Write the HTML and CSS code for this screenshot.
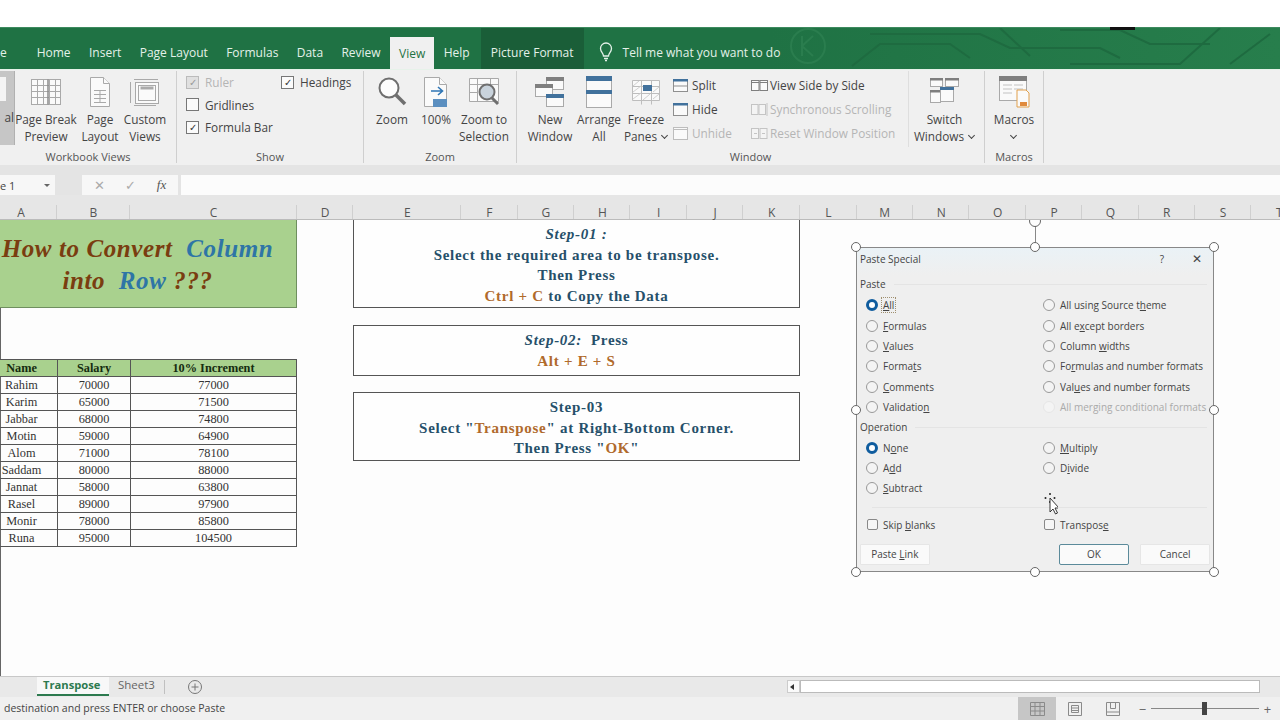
FILE: index.html
```html
<!DOCTYPE html>
<html lang="en">
<head>
    <meta charset="UTF-8">
    <title>Transpose - Excel</title>
    <link rel="stylesheet" href="styles.css">
</head>
<body>

<div class="top-gap"></div>

<!-- Ribbon tabs -->
<div class="tabbar">
    <svg class="circuit" width="520" height="42" viewBox="0 0 520 42" fill="none" stroke="#1e6b40" stroke-width="2">
        <circle cx="48" cy="18" r="17" stroke="#2a7d4e"/>
        <path d="M42 8v20M42 18l11-10M42 18l11 10" stroke="#2a7d4e"/>
        <path d="M92 38l28-22h70l20 14M110 6h110l30 14h90l20 10M240 0l30 28M310 36h110l40-36M470 36l40-30M300 2h60l30 14h60"/>
    </svg>
    <i class="title-mark"></i>
    <span class="tab cut">e</span>
    <span class="tab">Home</span>
    <span class="tab">Insert</span>
    <span class="tab">Page Layout</span>
    <span class="tab">Formulas</span>
    <span class="tab">Data</span>
    <span class="tab">Review</span>
    <span class="tab active">View</span>
    <span class="tab">Help</span>
    <span class="tab picture">Picture Format</span>
    <svg class="bulb" width="16" height="20" viewBox="0 0 16 20" fill="none" stroke="#e4f1e9" stroke-width="1.3">
        <path d="M5.5 14c0-3-3-4-3-7.5a5.5 5.5 0 0 1 11 0c0 3.500-3 4.500-3 7.500z"/>
        <path d="M6 16.500h4M7 18.500h2"/>
    </svg>
    <span class="tell">Tell me what you want to do</span>
</div>

<!-- Ribbon -->
<div class="ribbon">
    <div class="group g-workbook">
        <div class="group-body">
            <div class="normal-btn">al</div>
            <div class="big w62">
                <svg width="32" height="30" viewBox="0 0 32 30" fill="#fafafa" stroke="#a9a9a9"><rect x="1.500" y="2.500" width="29" height="25"/><path d="M1.500 8.500h29M1.500 14.500h29M1.500 20.500h29M7.500 2.500v25M13.500 2.500v25M19.500 2.500v25M25.500 2.500v25"/><path d="M18 2.500v25" stroke="#8a8a8a" stroke-width="1.500"/></svg>
                <span>Page Break<br>Preview</span>
            </div>
            <div class="big w46">
                <svg width="26" height="32" viewBox="0 0 26 32" fill="#fafafa" stroke="#a9a9a9"><path d="M3.500 1.500h13l6 6v23h-19z"/><path d="M16.500 1.500v6h6M7 14.500h12M7 18.500h12M7 22.500h12M7 26.500h12M13 14.500v12"/></svg>
                <span>Page<br>Layout</span>
            </div>
            <div class="big w44">
                <svg width="32" height="30" viewBox="0 0 32 30" fill="none" stroke="#a9a9a9"><path d="M1.500 5v21M5 2.500h24M5 28.500h22"/><rect x="6.500" y="5.500" width="23" height="21" fill="#fafafa"/><rect x="9.500" y="8.500" width="17" height="15"/><rect x="12" y="10" width="12" height="2" fill="#a9a9a9"/></svg>
                <span>Custom<br>Views</span>
            </div>
        </div>
        <div class="group-label">Workbook Views</div>
    </div>

    <div class="group g-show">
        <div class="group-body">
            <div class="show-col w95">
                <div class="check-row off"><span class="check dim">&#10003;</span>Ruler</div>
                <div class="check-row"><span class="check"></span>Gridlines</div>
                <div class="check-row"><span class="check">&#10003;</span>Formula Bar</div>
            </div>
            <div class="show-col">
                <div class="check-row"><span class="check">&#10003;</span>Headings</div>
            </div>
        </div>
        <div class="group-label">Show</div>
    </div>

    <div class="group g-zoom">
        <div class="group-body">
            <div class="big w44">
                <svg width="32" height="32" viewBox="0 0 32 32" fill="none" stroke="#6f6f6f" stroke-width="2"><circle cx="13" cy="12" r="9.500" fill="#fdfdfd"/><path d="M20 19l9 9" stroke-width="3.500"/></svg>
                <span>Zoom</span>
            </div>
            <div class="big w44">
                <svg width="28" height="32" viewBox="0 0 28 32" fill="#fafafa" stroke="#a9a9a9"><path d="M2.500 1.500h15l7 7v22h-22z"/><path d="M17.500 1.500v7h7"/><path d="M9 15h11M16 11l4.500 4-4.500 4" fill="none" stroke="#2f76b5" stroke-width="1.600"/><rect x="11" y="23" width="14" height="8" fill="#5b8fc0" stroke="none"/></svg>
                <span>100%</span>
            </div>
            <div class="big w52">
                <svg width="32" height="32" viewBox="0 0 32 32" fill="#fafafa" stroke="#a9a9a9"><path d="M1.500 2.500h29v23h-29zM1.500 8.500h29M9.500 2.500v23M22.500 2.500v6M1.500 16.500h8"/><circle cx="19" cy="16" r="7.500" fill="#c9d3dc" stroke="#6f6f6f" stroke-width="2"/><path d="M24 22l6 6" stroke="#6f6f6f" stroke-width="3"/></svg>
                <span>Zoom to<br>Selection</span>
            </div>
        </div>
        <div class="group-label">Zoom</div>
    </div>

    <div class="group g-window">
        <div class="group-body">
            <div class="big w50">
                <svg width="32" height="32" viewBox="0 0 32 32" fill="#fafafa" stroke="#a9a9a9"><rect x="12.500" y="1.500" width="17" height="12"/><rect x="12" y="1" width="18" height="4" fill="#7f7f7f" stroke="none"/><rect x="1.500" y="8.500" width="17" height="12"/><rect x="1" y="8" width="18" height="4" fill="#7f7f7f" stroke="none"/><rect x="12.500" y="18.500" width="17" height="12"/><rect x="12" y="18" width="18" height="4" fill="#41719c" stroke="none"/></svg>
                <span>New<br>Window</span>
            </div>
            <div class="big w48">
                <svg width="28" height="34" viewBox="0 0 28 34" fill="#fafafa" stroke="#a9a9a9"><rect x="1.500" y="1.500" width="25" height="31"/><rect x="1" y="1" width="26" height="5" fill="#41719c" stroke="none"/><rect x="1" y="15" width="26" height="4" fill="#41719c" stroke="none"/></svg>
                <span>Arrange<br>All</span>
            </div>
            <div class="big w46">
                <svg width="30" height="28" viewBox="0 0 30 28" fill="#fafafa" stroke="#bdbdbd"><path d="M1.500 2.500h27v20h-27zM1.500 8.500h27M1.500 15.500h27M10.500 2.500v24M20.500 2.500v24"/><path d="M2 8l6-5M2 14l8-6M2 21l8-6M12 22l7-6M22 21l6-5M22 14l6-5" stroke="#d0d0d0"/><rect x="12" y="7" width="9" height="6" fill="#41719c" stroke="none"/></svg>
                <span>Freeze<br>Panes<i class="caret"></i></span>
            </div>
            <div class="small-col w78">
                <div class="small-row">
                    <svg width="15" height="15" viewBox="0 0 15 15" fill="#fafafa" stroke="#8f8f8f"><rect x=".5" y="1.500" width="14" height="12"/><rect x="0" y="1" width="15" height="2.500" fill="#41719c" stroke="none"/><path d="M.5 8h14"/></svg>Split
                </div>
                <div class="small-row">
                    <svg width="15" height="15" viewBox="0 0 15 15" fill="#fafafa" stroke="#8f8f8f"><rect x=".5" y="1.500" width="14" height="12"/><rect x="0" y="1" width="15" height="2.500" fill="#41719c" stroke="none"/></svg>Hide
                </div>
                <div class="small-row off">
                    <svg width="15" height="15" viewBox="0 0 15 15" fill="#fafafa" stroke="#bdbdbd"><rect x=".5" y="1.500" width="14" height="12"/><path d="M.5 3.500h14"/></svg>Unhide
                </div>
            </div>
            <div class="small-col w159">
                <div class="small-row tight">
                    <svg width="17" height="15" viewBox="0 0 17 15" fill="#fafafa" stroke="#7f7f7f"><rect x=".5" y="2.500" width="7.500" height="10"/><rect x="9" y="2.500" width="7.500" height="10"/><path d="M.5 4.500h7.500M9 4.500h7.500"/></svg>View Side by Side
                </div>
                <div class="small-row off tight">
                    <svg width="17" height="15" viewBox="0 0 17 15" fill="#f4f4f4" stroke="#c4c4c4"><rect x=".5" y="2.500" width="6.500" height="10"/><rect x="8" y="2.500" width="6.500" height="10"/><path d="M16 1v13"/></svg>Synchronous Scrolling
                </div>
                <div class="small-row off tight">
                    <svg width="17" height="15" viewBox="0 0 17 15" fill="#f4f4f4" stroke="#c4c4c4"><rect x=".5" y="2.500" width="7" height="10"/><rect x="9" y="2.500" width="7" height="10"/><path d="M3 7.500h3M11 7.500h3"/></svg>Reset Window Position
                </div>
            </div>
            <div class="big w72 divided">
                <svg width="32" height="32" viewBox="0 0 32 32" fill="#fafafa" stroke="#a9a9a9"><rect x="1.500" y="2.500" width="12" height="8"/><rect x="16.500" y="2.500" width="13" height="8"/><rect x="1.500" y="14.500" width="10" height="12"/><rect x="1" y="2" width="13" height="2.500" fill="#7f7f7f" stroke="none"/><rect x="16" y="2" width="14" height="2.500" fill="#7f7f7f" stroke="none"/><rect x="1" y="14" width="11" height="2.500" fill="#7f7f7f" stroke="none"/><rect x="11.500" y="11.500" width="13" height="14"/><rect x="11" y="11" width="14" height="3" fill="#41719c" stroke="none"/></svg>
                <span>Switch<br>Windows<i class="caret"></i></span>
            </div>
        </div>
        <div class="group-label">Window</div>
    </div>

    <div class="group g-macros">
        <div class="group-body">
            <div class="big w58">
                <svg width="36" height="34" viewBox="0 0 36 34" fill="#fafafa" stroke="#a9a9a9"><rect x="3.500" y="1.500" width="27" height="24"/><rect x="3" y="1" width="28" height="5" fill="#7f7f7f" stroke="none"/><path d="M7 10h9M18 10h9M7 14h9M18 14h9M7 18h9" stroke="#c2c2c2"/><path d="M21 15h9l3 3v14H21z" stroke="#e1a04c"/><rect x="24" y="27" width="7" height="4" fill="#e08a3c" stroke="none"/></svg>
                <span>Macros<br><i class="caret solo"></i></span>
            </div>
        </div>
        <div class="group-label">Macros</div>
    </div>
</div>
<div class="ribbon-shade"></div>

<!-- Formula bar -->
<div class="formula-bar">
    <div class="name-box"><span>e 1</span><i class="small-arrow"></i></div>
    <div class="grip"></div>
    <div class="fx-box">
        <span class="fx-btn">&#10005;</span>
        <span class="fx-btn">&#10003;</span>
        <span class="fx-btn fx">fx</span>
    </div>
    <div class="fx-input"></div>
</div>

<!-- Column letters -->
<div class="col-head">
    <span class="w72">A</span><span class="w73">B</span><span class="w167">C</span><span class="w56">D</span>
    <span class="w108">E</span><span class="w56">F</span><span class="w57">G</span><span class="w56">H</span>
    <span class="w57">I</span><span class="w56">J</span><span class="w57">K</span><span class="w57">L</span>
    <span class="w56">M</span><span class="w57">N</span><span class="w56">O</span><span class="w57">P</span>
    <span class="w56">Q</span><span class="w56">R</span><span class="w56">S</span><span class="w56">T</span>
</div>

<!-- Sheet -->
<div class="sheet">
    <div class="left-block">
        <div class="title-box">
            <span class="brown">How to Convert</span>&nbsp; <span class="blue">Column</span><br>
            <span class="brown">into</span>&nbsp; <span class="blue">Row</span> <span class="brown">???</span>
        </div>
        <table class="salary">
            <tr><th class="c-name">Name</th><th class="c-sal">Salary</th><th>10% Increment</th></tr>
            <tr><td>Rahim</td><td>70000</td><td>77000</td></tr>
            <tr><td>Karim</td><td>65000</td><td>71500</td></tr>
            <tr><td>Jabbar</td><td>68000</td><td>74800</td></tr>
            <tr><td>Motin</td><td>59000</td><td>64900</td></tr>
            <tr><td>Alom</td><td>71000</td><td>78100</td></tr>
            <tr><td>Saddam</td><td>80000</td><td>88000</td></tr>
            <tr><td>Jannat</td><td>58000</td><td>63800</td></tr>
            <tr><td>Rasel</td><td>89000</td><td>97900</td></tr>
            <tr><td>Monir</td><td>78000</td><td>85800</td></tr>
            <tr><td>Runa</td><td>95000</td><td>104500</td></tr>
        </table>
    </div>

    <div class="steps">
        <div class="step step-1">
            <em>Step-01 :</em><br>
            Select the required area to be transpose.<br>
            Then Press<br>
            <span class="key">Ctrl + C</span> to Copy the Data
        </div>
        <div class="step step-2">
            <em>Step-02:</em>&nbsp; Press<br>
            <span class="key">Alt + E + S</span>
        </div>
        <div class="step step-3">
            Step-03<br>
            Select "<span class="key">Transpose</span>" at Right-Bottom Corner.<br>
            Then Press "<span class="key">OK</span>"
        </div>
    </div>

    <div class="dialog">
        <i class="rotate-line"></i><i class="rotate-knob"></i>
        <i class="handle h-tl"></i><i class="handle h-tc"></i><i class="handle h-tr"></i>
        <i class="handle h-ml"></i><i class="handle h-mr"></i>
        <i class="handle h-bl"></i><i class="handle h-bc"></i><i class="handle h-br"></i>

        <div class="dlg-title"><span>Paste Special</span><span class="dlg-help">?</span><span class="dlg-close">&#10005;</span></div>

        <div class="dlg-label">Paste</div>
        <div class="opts">
            <div class="opt"><i class="radio on"></i><span class="focus"><u>A</u>ll</span></div>
            <div class="opt"><i class="radio"></i><span>All using Source t<u>h</u>eme</span></div>
            <div class="opt"><i class="radio"></i><span><u>F</u>ormulas</span></div>
            <div class="opt"><i class="radio"></i><span>All e<u>x</u>cept borders</span></div>
            <div class="opt"><i class="radio"></i><span><u>V</u>alues</span></div>
            <div class="opt"><i class="radio"></i><span>Column <u>w</u>idths</span></div>
            <div class="opt"><i class="radio"></i><span>Forma<u>t</u>s</span></div>
            <div class="opt"><i class="radio"></i><span>Fo<u>r</u>mulas and number formats</span></div>
            <div class="opt"><i class="radio"></i><span><u>C</u>omments</span></div>
            <div class="opt"><i class="radio"></i><span>Val<u>u</u>es and number formats</span></div>
            <div class="opt"><i class="radio"></i><span>Validatio<u>n</u></span></div>
            <div class="opt disabled"><i class="radio"></i><span>All merging conditional formats</span></div>
        </div>

        <div class="dlg-label">Operation</div>
        <div class="opts">
            <div class="opt"><i class="radio on"></i><span>N<u>o</u>ne</span></div>
            <div class="opt"><i class="radio"></i><span><u>M</u>ultiply</span></div>
            <div class="opt"><i class="radio"></i><span>A<u>d</u>d</span></div>
            <div class="opt"><i class="radio"></i><span>D<u>i</u>vide</span></div>
            <div class="opt"><i class="radio"></i><span><u>S</u>ubtract</span></div>
        </div>

        <div class="dlg-rule"></div>
        <div class="opts">
            <div class="opt"><i class="box"></i><span>Skip <u>b</u>lanks</span></div>
            <div class="opt"><i class="box"></i><span>Transpos<u>e</u></span></div>
        </div>

        <div class="dlg-buttons">
            <button class="dlg-btn link">Paste <u>L</u>ink</button>
            <button class="dlg-btn ok">OK</button>
            <button class="dlg-btn">Cancel</button>
        </div>

        <svg class="cursor" width="14" height="24" viewBox="0 0 14 24">
            <g fill="#222"><circle cx="6" cy="2" r="1"/><circle cx="1.500" cy="6" r="1"/><circle cx="10.500" cy="6" r="1"/><circle cx="6" cy="10" r="1"/></g>
            <path d="M6 6v14l3-3 2.500 5 2-1-2.500-5h4z" fill="#fff" stroke="#222" stroke-width=".9"/>
        </svg>
    </div>
</div>

<!-- Sheet tabs -->
<div class="sheet-tabs">
    <span class="sheet-tab current">Transpose</span>
    <span class="sheet-tab">Sheet3</span>
    <i class="tab-sep"></i>
    <svg class="add-sheet" width="16" height="16" viewBox="0 0 16 16" fill="none" stroke="#777"><circle cx="8" cy="8" r="6.500"/><path d="M8 4.500v7M4.500 8h7"/></svg>
    <div class="h-scroll"><span class="scroll-btn"></span><span class="scroll-track"></span></div>
</div>

<!-- Status bar -->
<div class="status">
    <span class="status-text">destination and press ENTER or choose Paste</span>
    <div class="view-btn selected">
        <svg width="15" height="14" viewBox="0 0 15 14" fill="none" stroke="#8a8a8a"><path d="M.5.500h14v13H.5zM.5 4.500h14M.5 9h14M5 .5v13M10 .5v13"/></svg>
    </div>
    <div class="view-btn">
        <svg width="14" height="14" viewBox="0 0 14 14" fill="none" stroke="#8a8a8a"><path d="M.5.500h13v13H.5zM3.500 3.500h7v7h-7zM3.500 6h7M3.500 8.500h7"/></svg>
    </div>
    <div class="view-btn">
        <svg width="14" height="14" viewBox="0 0 14 14" fill="none" stroke="#8a8a8a"><path d="M.5.500h13v13H.5zM.5 10h13M4.500.5v6h5v-6"/></svg>
    </div>
    <div class="zoom-slider">
        <span class="zoom-sign">&minus;</span>
        <span class="zoom-track"><i class="zoom-thumb"></i></span>
        <span class="zoom-sign">+</span>
    </div>
</div>

</body>
</html>
```

FILE: styles.css
```css
* { margin: 0; padding: 0; box-sizing: border-box; }
html, body { width: 1280px; height: 720px; overflow: hidden; }
body {
    display: flex; flex-direction: column; background: #fff;
    font-family: "Open Sans", "Noto Sans", sans-serif; color: #444;
}
.top-gap { height: 27px; flex: none; }

/* tab row */
.tabbar {
    height: 42px; flex: none; background: linear-gradient(90deg, #1f7244 60%, #277e4c); position: relative;
    display: flex; align-items: center; color: #e4f1e9; font-size: 12px;
    border-top: 1px solid #3d8a5e;
}
.circuit { position: absolute; right: 0; top: 0; }
.title-mark { position: absolute; left: 1110px; top: -1px; width: 25px; height: 3px; background: #111; }
.tab { padding: 0 9.2px; height: 100%; display: flex; align-items: center; position: relative; margin-top: 7px; }
.tab.cut { width: 27.500px; padding: 0; margin-left: 0; }
.tab.active { background: #f0f0f0; color: #1f7244; height: 32px; align-self: flex-end; margin-top: 0; padding-top: 0; }
.tab.picture { background: #1a5e38; margin-left: 2px; padding: 7px 10px 0; margin-top: 0; }
.bulb { margin: 7px 9px 0 14px; position: relative; }
.tell { margin-top: 7px; position: relative; }

/* ribbon */
.ribbon { height: 96px; flex: none; background: #f0f0f0; display: flex; font-size: 11.800px; color: #444; border-top: 1px solid #e6f2e9; }
.group { border-right: 1px solid #cfcfcf; height: 92px; display: flex; flex-direction: column; margin-top: 1px; }
.g-workbook { width: 177px; }
.g-show { width: 187px; }
.g-zoom { width: 153px; }
.g-window { width: 468px; }
.g-macros { width: 59px; }
.group-body { height: 78px; flex: none; display: flex; }
.group-label { font-size: 11px; text-align: center; color: #555; line-height: 16px; flex: none; }
.normal-btn {
    width: 15px; height: 74px; background: #c6c6c6; border-right: 1px solid #b0b0b0;
    text-align: right; padding-top: 38px; position: relative; white-space: nowrap;
}
.normal-btn::before { content: ""; position: absolute; left: 0; top: 6px; width: 6px; height: 24px; background: #f4f4f4; }
.g-zoom .group-body { padding-left: 6px; }
.g-window .group-body { padding-left: 8px; }
.big { display: flex; flex-direction: column; align-items: center; text-align: center; line-height: 17px; padding-top: 4px; white-space: nowrap; }
.big svg { height: 34px; flex: none; margin-bottom: 2px; }
.w44 { width: 44px; }
.w46 { width: 46px; }
.w48 { width: 48px; }
.w50 { width: 50px; }
.w52 { width: 52px; }
.w58 { width: 58px; }
.w62 { width: 62px; }
.w72 { width: 72px; }
.w78 { width: 78px; }
.w95 { width: 95px; }
.w159 { width: 159px; }
.caret { display: inline-block; width: 5px; height: 5px; border-right: 1px solid #444; border-bottom: 1px solid #444; transform: rotate(45deg); margin: 0 1px 3px 5px; }
.caret.solo { margin: 0 0 3px; }
.divided { border-left: 1px solid #dedede; height: 76px; margin-left: 2px; }

.show-col { display: flex; flex-direction: column; }
.g-show .group-body { padding-left: 9px; }
.check-row { height: 22.500px; display: flex; align-items: center; gap: 6px; white-space: nowrap; }
.check {
    width: 13px; height: 13px; border: 1px solid #777; background: #fbfbfb;
    font-size: 10px; line-height: 11px; text-align: center; color: #333; flex: none;
}
.check.dim { background: #e0e0e0; border-color: #bbb; color: #999; }
.off { color: #b5b5b5; }

.small-col { display: flex; flex-direction: column; padding-top: 2px; padding-left: 4px; }
.small-row { height: 24px; display: flex; align-items: center; gap: 4px; white-space: nowrap; }
.small-row.tight { gap: 2px; }

.ribbon-shade { height: 10px; flex: none; background: #e4e4e4; }

/* formula bar */
.formula-bar { height: 20px; flex: none; background: #e4e4e4; display: flex; font-size: 11px; }
.name-box { width: 55px; background: #f7f7f7; display: flex; align-items: center; justify-content: space-between; padding-right: 5px; }
.small-arrow { border: 3px solid transparent; border-top: 3px solid #666; margin-top: 3px; }
.grip { width: 27px; }
.fx-box { width: 96px; background: #f7f7f7; display: flex; align-items: center; padding-left: 9px; gap: 14px; color: #aaa; }
.fx-btn { width: 17px; text-align: center; font-size: 13px; }
.fx-btn.fx { font-family: "Liberation Serif", serif; font-style: italic; color: #555; }
.fx-input { flex: 1; background: #fcfcfc; margin-left: 3px; }

.col-head {
    height: 25px; flex: none; background: #e6e6e6; display: flex; padding-top: 10px; margin-left: -15px;
    width: 1295px; font-size: 12px; color: #555; border-bottom: 1px solid #bbb;
}
.col-head span { flex: none; text-align: center; border-right: 1px solid #cfcfcf; line-height: 15px; padding: 0 0 0 1px; }
.w72 { width: 72px; }
.w73 { width: 73px; }
.w167 { width: 167px; }
.w56 { width: 56.300px; }
.w57 { width: 56.600px; }
.w108 { width: 108px; }

/* sheet */
.sheet { flex: 1; background: #fdfdfd; display: flex; overflow: hidden; box-shadow: inset 1px 0 #666; }
.left-block { width: 312px; margin-left: -15px; flex: none; }
.title-box {
    height: 88px; background: #a9d18e; border-right: 1px solid #6f8f5f; border-bottom: 1px solid #6f8f5f;
    font: italic bold 25px/32px "Liberation Serif", serif; text-align: center; padding: 13px 6px 0 0;
    letter-spacing: .6px; white-space: nowrap;
}
.brown { color: #7a3d10; }
.blue { color: #2e75a6; }
.salary {
    margin-top: 51px; width: 312px; border-collapse: collapse; table-layout: fixed;
    font: 12.300px/16px "Liberation Serif", serif; color: #333; text-align: center;
}
.salary th, .salary td { border: 1px solid #555; height: 17px; padding: 0; }
.salary th { background: #a9d18e; color: #152c10; font-weight: bold; }
.c-name { width: 72px; }
.c-sal { width: 73px; }

.steps { width: 447px; margin-left: 56px; flex: none; display: flex; flex-direction: column; gap: 17px; }
.step {
    border: 1px solid #555; text-align: center; background: #fefefe; color: #26506a;
    font: bold 15px/20.500px "Liberation Serif", serif; letter-spacing: .72px; white-space: nowrap;
}
.step em { font-weight: bold; }
.step-1 { height: 88px; border-top: none; padding-top: 4px; }
.step-2 { height: 51px; padding-top: 4px; }
.step-3 { height: 69px; padding-top: 4px; margin-top: -1px; }
.key { color: #b06a2c; }

/* dialog */
.dialog {
    width: 358px; height: 325px; margin: 27px 0 0 56px; flex: none; position: relative;
    background: #efefef; border: 1px solid #888; font-size: 10px; color: #444;
}
.dlg-title {
    height: 27px; display: flex; align-items: center; padding: 0 11px 6px 3px;
    background: linear-gradient(#eaf2f6, #efefef); color: #444;
}
.dlg-title span:first-child { flex: 1; }
.dlg-help { margin-right: 28px; }
.dlg-close { font-size: 12px; }
.dlg-label { height: 19px; line-height: 19px; padding-left: 3px; margin-bottom: 1px; display: flex; align-items: center; gap: 8px; }
.dlg-label::after { content: ""; flex: 1; border-top: 1px solid #e4e4e4; margin-right: 6px; }
.opts + .dlg-label { padding-top: 2px; }
.opts { display: grid; grid-template-columns: 177px 1fr; grid-auto-rows: 20.400px; padding-left: 9px; }
.opt { display: flex; align-items: center; gap: 5px; white-space: nowrap; }
.opt.disabled { color: #aaa; }
.opt.disabled .radio { border-color: #e6e6e6; background: #f4f4f4; }
.radio { width: 12px; height: 12px; border-radius: 50%; border: 1px solid #999; background: #f4f4f4; flex: none; }
.radio.on { border: 3.500px solid #0f5c9e; background: #fff; }
.box { width: 11px; height: 11px; border: 1px solid #888; border-radius: 2px; background: #f6f6f6; flex: none; margin: 0 .5px; }
.focus { outline: 1px dotted #a09070; padding: 0 1px; margin-left: -1px; }
.dlg-rule { border-top: 1px solid #e4e4e4; margin: 8px 6px 7px 15px; }
.dlg-buttons { display: flex; padding: 9px 3px 0; }
.dlg-btn {
    width: 70px; height: 21px; border: 1px solid #e6e6e6; background: #fafafa;
    font: inherit; color: #444; border-radius: 1px;
}
.dlg-btn.ok { margin-left: 129px; margin-right: 11px; width: 71px; border-color: #5b8a9a; border-radius: 2px; }
.cursor { position: absolute; left: 187px; top: 244px; }

.handle { position: absolute; width: 10px; height: 10px; border: 1.500px solid #666; border-radius: 50%; background: #fff; z-index: 2; }
.h-tl, .h-tc, .h-tr { top: -6px; }
.h-ml, .h-mr { top: 157px; }
.h-bl, .h-bc, .h-br { bottom: -6px; }
.h-tl, .h-ml, .h-bl { left: -6px; }
.h-tc, .h-bc { left: 173px; }
.h-tr, .h-mr, .h-br { right: -6px; }
.rotate-line { position: absolute; left: 178px; top: -22px; height: 22px; border-left: 1px solid #888; }
.rotate-knob { position: absolute; left: 172px; top: -33px; width: 12px; height: 12px; border: 1.500px solid #666; border-radius: 50%; }

/* sheet tabs + status */
.sheet-tabs { height: 21px; flex: none; background: #e9e9e9; border-top: 1px solid #c8c8c8; display: flex; align-items: flex-start; font-size: 11.500px; color: #666; padding-left: 37px; position: relative; }
.sheet-tab { height: 19px; line-height: 16px; padding: 0 9px; }
.sheet-tab.current { width: 72px; background: #f8f8f8; color: #2d7a4f; font-weight: bold; border-bottom: 2px solid #2d7a4f; padding: 0 6px; white-space: nowrap; font-size: 11.200px; }
.tab-sep { width: 1px; height: 14px; background: #c0c0c0; margin: 3px 0 0 0; }
.add-sheet { margin: 2px 0 0 22px; }
.h-scroll { position: absolute; left: 787px; top: 3px; width: 473px; height: 13px; display: flex; }
.scroll-btn { width: 13px; background: #fafafa; border: 1px solid #ccc; position: relative; }
.scroll-btn::after { content: ""; position: absolute; left: 2px; top: 2.500px; border: 3.500px solid transparent; border-right: 4px solid #333; border-left: none; }
.scroll-track { flex: 1; background: #fff; border: 1px solid #bbb; }
.status { height: 23px; flex: none; background: #f0f0f0; display: flex; align-items: stretch; font-size: 10.500px; color: #444; }
.status-text { width: 1018px; padding-left: 4px; line-height: 23px; white-space: nowrap; }
.view-btn { width: 38px; display: flex; align-items: center; justify-content: center; }
.view-btn.selected { background: #c6c6c6; }
.zoom-slider { display: flex; align-items: center; margin-left: 5px; gap: 3px; color: #666; font-size: 13px; }
.zoom-sign { width: 11px; text-align: center; }
.zoom-track { width: 108px; height: 1px; background: #888; position: relative; }
.zoom-thumb { position: absolute; left: 51px; top: -6px; width: 5px; height: 13px; background: #444; }
```
